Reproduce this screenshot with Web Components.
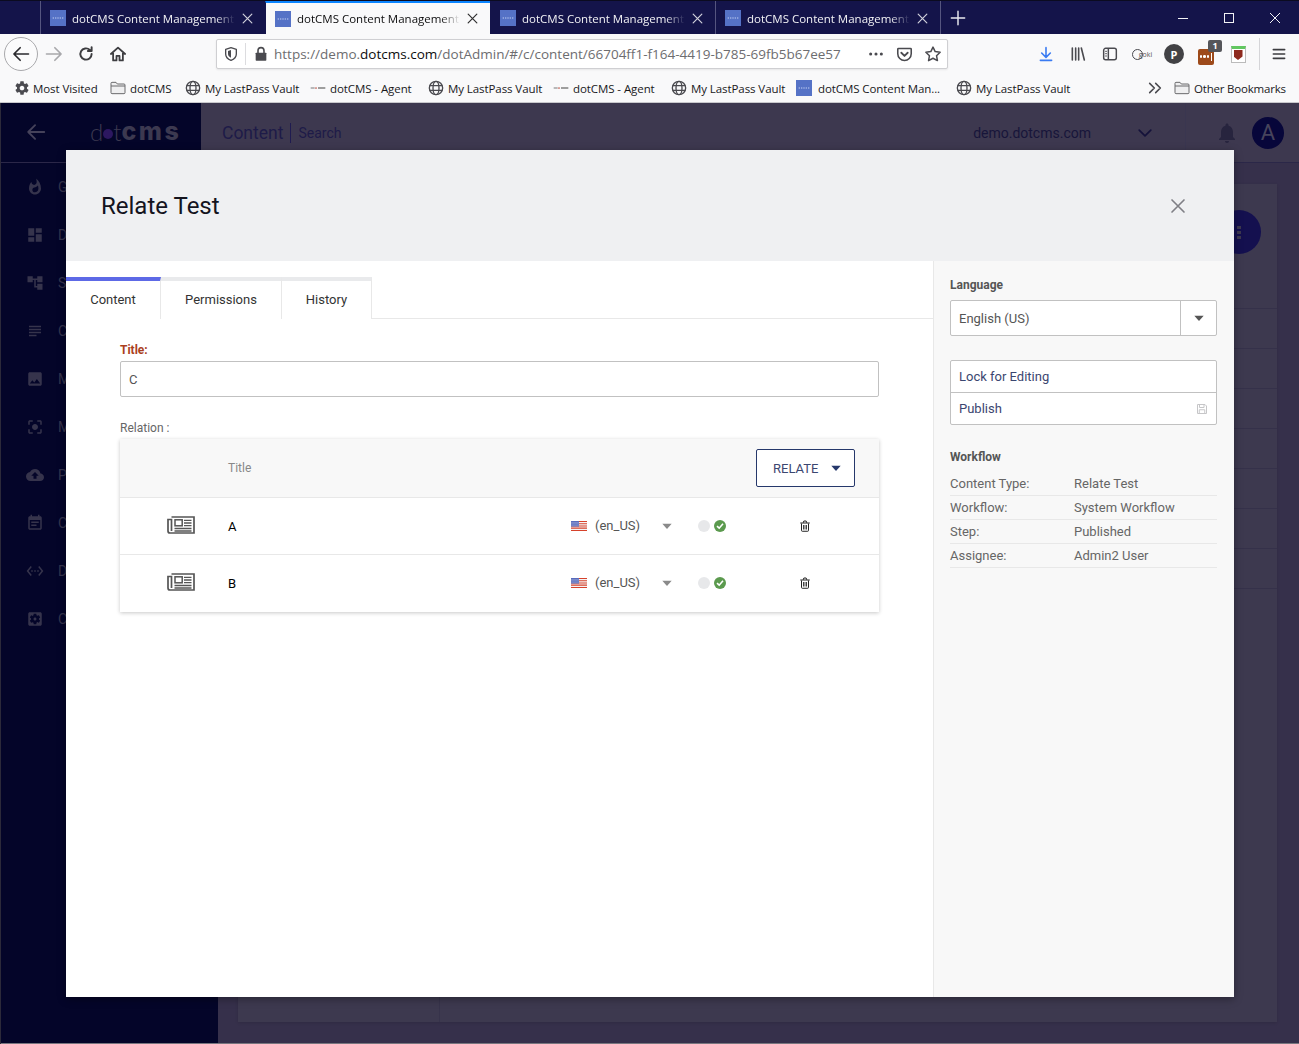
<!DOCTYPE html>
<html lang="en"><head><meta charset="utf-8"><title>dotCMS Content Management</title>
<style>
html,body{margin:0;padding:0;background:#2c2a3a}
body{width:1299px;height:1044px;overflow:hidden;font-family:Roboto,"Liberation Sans",sans-serif}
</style></head><body>
<browser-frame>
  <tab-strip>
    <br-tab sep>dotCMS Content Management</br-tab>
    <br-tab active>dotCMS Content Management</br-tab>
    <br-tab>dotCMS Content Management</br-tab>
    <br-tab sep>dotCMS Content Management</br-tab>
  </tab-strip>
  <nav-toolbar></nav-toolbar>
  <bookmark-bar>
    <bm-item icon="gear" w="96" gap="3">Most Visited</bm-item>
    <bm-item icon="folder" w="75">dotCMS</bm-item>
    <bm-item icon="globe" w="125">My LastPass Vault</bm-item>
    <bm-item icon="mini" w="118">dotCMS - Agent</bm-item>
    <bm-item icon="globe" w="125">My LastPass Vault</bm-item>
    <bm-item icon="mini" w="118">dotCMS - Agent</bm-item>
    <bm-item icon="globe" w="125">My LastPass Vault</bm-item>
    <bm-item icon="fav" w="160" gap="6">dotCMS Content Man...</bm-item>
    <bm-item icon="globe" w="191">My LastPass Vault</bm-item>
    <bm-item icon="chev2" w="27"></bm-item>
    <bm-item icon="folder" w="125" tight>Other Bookmarks</bm-item>
  </bookmark-bar>
</browser-frame>
<app-shell>
  <nav-entry icon="whatshot">G</nav-entry>
  <nav-entry icon="dashboard">D</nav-entry>
  <nav-entry icon="hub">S</nav-entry>
  <nav-entry icon="subject">C</nav-entry>
  <nav-entry icon="image">M</nav-entry>
  <nav-entry icon="focus">M</nav-entry>
  <nav-entry icon="cloud">P</nav-entry>
  <nav-entry icon="event">C</nav-entry>
  <nav-entry icon="ethernet">D</nav-entry>
  <nav-entry icon="settings">C</nav-entry>
</app-shell>
<edit-dialog></edit-dialog>

<script>
const S=(w,inner,vb)=>`<svg xmlns="http://www.w3.org/2000/svg" width="${w}" height="${w}" viewBox="${vb||'0 0 24 24'}" style="display:block">${inner}</svg>`;
const M=d=>`<path fill="currentColor" d="${d}"/>`;
const L=(d,sw)=>`<path fill="none" stroke="currentColor" stroke-width="${sw||1.5}" stroke-linecap="round" stroke-linejoin="round" d="${d}"/>`;
const ICONS={
 whatshot:M("M13.5.67s.74 2.65.74 4.8c0 2.06-1.35 3.73-3.41 3.73-2.07 0-3.63-1.67-3.63-3.73l.03-.36C5.21 7.51 4 10.62 4 14c0 4.42 3.58 8 8 8s8-3.58 8-8C20 8.61 17.41 3.8 13.5.67zM11.71 19c-1.78 0-3.22-1.4-3.22-3.14 0-1.62 1.05-2.76 2.81-3.12 1.77-.36 3.6-1.21 4.62-2.58.39 1.29.59 2.65.59 4.04 0 2.65-2.15 4.8-4.8 4.8z"),
 dashboard:M("M3 13h8V3H3v10zm0 8h8v-6H3v6zm10 0h8V11h-8v10zm0-18v6h8V3h-8z"),
 hub:M("M22 11V3h-7v3H9V3H2v8h7V8h2v10h4v3h7v-8h-7v3h-2V8h2v3z"),
 subject:M("M14 17H4v2h10v-2zm6-8H4v2h16V9zM4 15h16v-2H4v2zM4 5v2h16V5H4z"),
 image:M("M21 19V5c0-1.1-.9-2-2-2H5c-1.1 0-2 .9-2 2v14c0 1.1.9 2 2 2h14c1.1 0 2-.9 2-2zM8.5 13.5l2.5 3.01L14.5 12l4.5 6H5l3.5-4.5z"),
 focus:M("M12 8c-2.21 0-4 1.79-4 4s1.79 4 4 4 4-1.79 4-4-1.79-4-4-4zm-7 7H3v4c0 1.1.9 2 2 2h4v-2H5v-4zM5 5h4V3H5c-1.1 0-2 .9-2 2v4h2V5zm14-2h-4v2h4v4h2V5c0-1.1-.9-2-2-2zm0 16h-4v2h4c1.1 0 2-.9 2-2v-4h-2v4z"),
 cloud:M("M19.35 10.04C18.67 6.59 15.64 4 12 4 9.11 4 6.6 5.64 5.35 8.04 2.34 8.36 0 10.91 0 14c0 3.31 2.69 6 6 6h13c2.76 0 5-2.24 5-5 0-2.64-2.05-4.78-4.65-4.96zM14 13v4h-4v-4H7l5-5 5 5h-3z"),
 event:M("M17 10H7v2h10v-2zm2-7h-1V1h-2v2H8V1H6v2H5c-1.11 0-1.99.9-1.99 2L3 19c0 1.1.89 2 2 2h14c1.1 0 2-.9 2-2V5c0-1.1-.9-2-2-2zm0 16H5V8h14v11zm-5-5H7v2h7v-2z"),
 ethernet:M("M7.77 6.76L6.23 5.48.82 12l5.41 6.52 1.54-1.28L3.42 12l4.35-5.24zM7 13h2v-2H7v2zm10-2h-2v2h2v-2zm-6 2h2v-2h-2v2zm6.77-7.52l-1.54 1.28L20.58 12l-4.35 5.24 1.54 1.28L23.18 12l-5.41-6.52z"),
 settings:M("M12 10c-1.1 0-2 .9-2 2s.9 2 2 2 2-.9 2-2-.9-2-2-2zm7-7H5c-1.11 0-2 .9-2 2v14c0 1.1.89 2 2 2h14c1.11 0 2-.9 2-2V5c0-1.1-.89-2-2-2zm-1.75 9c0 .23-.02.46-.05.68l1.48 1.16c.13.11.17.3.08.45l-1.4 2.42c-.09.15-.27.21-.43.15l-1.74-.7c-.36.28-.76.51-1.18.69l-.26 1.85c-.03.17-.18.3-.35.3h-2.8c-.17 0-.32-.13-.35-.29l-.26-1.85c-.43-.18-.82-.41-1.18-.69l-1.74.7c-.16.06-.34 0-.43-.15l-1.4-2.42c-.09-.15-.05-.34.08-.45l1.48-1.16c-.03-.23-.05-.46-.05-.69 0-.23.02-.46.05-.68l-1.48-1.16c-.13-.11-.17-.3-.08-.45l1.4-2.42c.09-.15.27-.21.43-.15l1.74.7c.36-.28.76-.51 1.18-.69l.26-1.85c.03-.17.18-.3.35-.3h2.8c.17 0 .32.13.35.29l.26 1.85c.43.18.82.41 1.18.69l1.74-.7c.16-.06.34 0 .43.15l1.4 2.42c.09.15.05.34-.08.45l-1.48 1.16c.03.23.05.46.05.69z"),
 bell:M("M12 22c1.1 0 2-.9 2-2h-4c0 1.1.9 2 2 2zm6-6v-5c0-3.07-1.63-5.64-4.5-6.32V4c0-.83-.67-1.5-1.5-1.5s-1.5.67-1.5 1.5v.68C7.64 5.36 6 7.92 6 11v5l-2 2v1h16v-1l-2-2z"),
 back:L("M3.5 12H21M11 4.5 3.5 12l7.5 7.5",2),
 back2:L("M3 12h17.5M13 4.5 20.5 12 13 19.5",2),
 plus:L("M12 2v20M2 12h20",2.2),
 chevd:L("M5 8.5l7 7 7-7",2),
 reload:L("M19.5 12a7.5 7.5 0 1 1-2.4-5.5M19.5 3v5h-5",2.6),
 home:L("M2.5 12 12 3.5 21.5 12M5.5 10.5V20.5h4.5v-6h4v6h4.5V10.5",2.4),
 shield:`<path fill="none" stroke="currentColor" stroke-width="2" stroke-linejoin="round" d="M12 2.5 20 5v7c0 5-4 8-8 9.5C8 20 4 17 4 12V5z"/><path fill="currentColor" d="M12 6v11.5c-2.5-1.2-4.5-3-4.5-5.5V7.500z"/>`,
 lock:`<path fill="currentColor" d="M5 10h14a1 1 0 0 1 1 1v10a1 1 0 0 1-1 1H5a1 1 0 0 1-1-1V11a1 1 0 0 1 1-1z"/>`+L("M7.5 10.5V7a4.5 4.5 0 0 1 9 0v3.5",2.4),
 more:`<g fill="currentColor"><circle cx="4" cy="12" r="2.3"/><circle cx="12" cy="12" r="2.3"/><circle cx="20" cy="12" r="2.3"/></g>`,
 pocket:L("M3.5 3.5h17a1 1 0 0 1 1 1V11a9.5 9.5 0 0 1-19 0V4.5a1 1 0 0 1 1-1z",2.2)+L("M7.5 9.5 12 14l4.5-4.5",2.6),
 star:L("M12 2.8l2.9 6 6.6.9-4.8 4.6 1.2 6.5L12 17.700l-5.900 3.100 1.200-6.500-4.800-4.600 6.600-.9z",2),
 download:L("M12 2.500V17M5.500 10.500 12 17l6.500-6.500",2.4)+L("M3.500 21.500h17",2.4),
 library:L("M3.500 3v18M8.500 3v18M13 3v18M17 3l4.500 18",2.4),
 sidebar:`<rect x="2.500" y="3.500" width="19" height="17" rx="3" fill="none" stroke="currentColor" stroke-width="2.200"/><path stroke="currentColor" stroke-width="2.200" d="M9.500 3.500v17"/><path stroke="currentColor" stroke-width="1.500" d="M4.800 8h2.500M4.800 11.500h2.500M4.800 15h2.500"/>`,
 menu:L("M3.500 5.500h17M3.500 12h17M3.500 18.500h17",2.4),
 gear:M("M19.430 12.980c.04-.32.07-.64.07-.98s-.03-.66-.07-.98l2.110-1.650c.19-.15.24-.42.12-.64l-2-3.460c-.12-.22-.39-.3-.61-.22l-2.490 1c-.52-.4-1.080-.73-1.690-.98l-.38-2.650C14.460 2.180 14.250 2 14 2h-4c-.25 0-.46.18-.49.42l-.38 2.650c-.61.25-1.170.59-1.690.98l-2.490-1c-.23-.09-.49 0-.61.220l-2 3.460c-.13.22-.07.49.12.64l2.110 1.650c-.04.32-.07.65-.07.98s.03.66.07.98l-2.110 1.650c-.19.15-.24.42-.12.64l2 3.460c.12.22.39.3.61.22l2.490-1c.52.4 1.080.73 1.690.98l.38 2.650c.03.24.24.42.49.42h4c.25 0 .46-.18.49-.42l.38-2.650c.61-.25 1.170-.59 1.690-.98l2.490 1c.23.09.49 0 .61-.22l2-3.460c.12-.22.07-.49-.12-.64l-2.110-1.650zM12 15.500c-1.930 0-3.500-1.570-3.500-3.500s1.570-3.500 3.500-3.500 3.500 1.570 3.500 3.500-1.570 3.500-3.500 3.500z"),
 folder:`<path fill="#efeff0" stroke="#6a6a6c" stroke-width="1.500" stroke-linejoin="round" d="M1.500 5a1.500 1.500 0 0 1 1.500-1.500h6L11 6h10a1.500 1.500 0 0 1 1.500 1.500V19a1.500 1.500 0 0 1-1.500 1.500H3A1.500 1.500 0 0 1 1.500 19z"/><path fill="none" stroke="#6a6a6c" stroke-width="1.500" d="M1.500 9h21"/>`,
 globe:`<g fill="none" stroke="currentColor" stroke-width="2"><circle cx="12" cy="12" r="10"/><ellipse cx="12" cy="12" rx="4.500" ry="10"/><path d="M2.500 8.500h19M2.500 15.500h19"/></g>`,
 mini:`<rect x="1" y="11" width="6" height="2" fill="#999"/><circle cx="9" cy="12" r="1.300" fill="#c0574a"/><rect x="12" y="10.800" width="11" height="2.400" fill="#888"/>`,
 fav:`<rect width="24" height="24" fill="#5572c6"/><path stroke="#9fb1e4" stroke-width="2" stroke-dasharray="2 1.500" d="M4 12h16"/>`,
 chev2:L("M4 5l7 7-7 7M13 5l7 7-7 7",2.4),
 close:L("M4 4l16 16M20 4 4 20",2.2),
 caret:`<path fill="currentColor" d="M4 8h16l-8 9z"/>`,
 save:`<path fill="none" stroke="currentColor" stroke-width="2" stroke-linejoin="round" d="M3 3h15l3 3v15H3z"/><path fill="none" stroke="currentColor" stroke-width="2" d="M7 3v6h9V3M6.500 21v-7.500h11V21"/>`,
 trash:`<g fill="none" stroke="currentColor" stroke-linejoin="round"><path stroke-width="2" d="M5 7v14a1.500 1.500 0 0 0 1.500 1.500h11A1.500 1.500 0 0 0 19 21V7"/><path stroke-width="2" d="M2.500 6h19M8.500 5.500l1.200-3.500h4.600l1.200 3.500"/><path stroke-width="1.700" d="M9 10v9M12 10v9M15 10v9"/></g>`,
};
const define=(n,c)=>customElements.define(n,c);
class Base extends HTMLElement{
  render(html){ (this.shadowRoot||this.attachShadow({mode:'open'})).innerHTML=html; }
}
define('x-icon',class extends Base{connectedCallback(){
  const s=this.getAttribute('size')||16;
  this.render(`<style>:host{display:inline-flex;flex:none;color:${this.getAttribute('color')||'inherit'}}</style>${S(s,ICONS[this.getAttribute('name')])}`);
}});
define('browser-frame',class extends Base{connectedCallback(){
  this.render(`<style>:host{display:block;box-sizing:border-box;font-family:"Open Sans","Noto Sans",sans-serif;border-top:1px solid #0b0b20;height:103px;background:#f9f9fa;border-bottom:1px solid #c8c8cc}</style><slot></slot>`);
}});
define('tab-strip',class extends Base{connectedCallback(){
  this.render(`<style>
  :host{display:flex;height:33px;background:#14144a;padding:0 1px 0 40px;color:#f2f2f5}
  .sep{width:1px;background:#55557f}
  .plus{width:33px;display:flex;align-items:center;justify-content:center;color:#e8e8ee}
  .sp{flex:1}
  .win{width:46px;display:flex;align-items:center;justify-content:center}
  </style><slot></slot><div class="sep"></div><div class="plus"><x-icon name="plus" size="16"></x-icon></div><div class="sp"></div>
  <div class="win"><svg width="12" height="12" viewBox="0 0 12 12"><path d="M1 6.500h10" stroke="#f2f2f5"/></svg></div>
  <div class="win"><svg width="12" height="12" viewBox="0 0 12 12"><rect x="1.500" y="1.500" width="9" height="9" fill="none" stroke="#f2f2f5"/></svg></div>
  <div class="win"><svg width="12" height="12" viewBox="0 0 12 12"><path d="M1 1l10 10M11 1 1 11" stroke="#f2f2f5"/></svg></div>`);
}});
define('br-tab',class extends Base{connectedCallback(){
  const a=this.hasAttribute('active'),sep=this.hasAttribute('sep');
  this.render(`<style>
  :host{display:flex;align-items:center;box-sizing:border-box;width:225px;height:33px;padding-left:9px;font-size:11.5px;letter-spacing:0;
    border-left:1px solid ${sep?'#55557f':'#14144a'};background-clip:padding-box;
    background-color:${a?'#f9f9fa':'transparent'};color:${a?'#0c0c0d':'#f2f2f5'};
    border-top:${a?'2px solid #0a84ff':'0'};padding-top:${a?0:1}px}
  .t{width:163px;margin-left:6px;white-space:nowrap;overflow:hidden;-webkit-mask-image:linear-gradient(90deg,#000 88%,transparent);mask-image:linear-gradient(90deg,#000 88%,transparent)}
  .x{margin-left:6px;opacity:.85}
  </style><x-icon name="fav" size="16"></x-icon><div class="t"><slot></slot></div><x-icon class="x" name="close" size="13"></x-icon>`);
}});
define('nav-toolbar',class extends Base{connectedCallback(){
  const b=(n,c,s)=>`<div class="b" style="color:${c||'#3d3d40'}"><x-icon name="${n}" size="${s||16}"></x-icon></div>`;
  this.render(`<style>
  :host{display:flex;align-items:center;height:36px;padding:4px 0 0 4px;background:#f9f9fa;box-sizing:border-box}
  .b{width:32px;height:32px;display:flex;align-items:center;justify-content:center;flex:none}
  .c{width:34px;height:34px;box-sizing:border-box;border:1px solid #a9a9ac;border-radius:50%;display:flex;align-items:center;justify-content:center;background:#fbfbfc;color:#2a2a2e;flex:none}
  .u{margin-left:82px;width:732px;height:30px;box-sizing:border-box;border:1px solid #cfcfd2;border-radius:2px;background:#fff;box-shadow:0 1px 2px rgba(0,0,0,.08);display:flex;align-items:center;flex:none;font-size:13.5px;letter-spacing:0;color:#6d6d70;white-space:nowrap}
  .u x-icon{color:#4a4a4f}
  .shield{margin-left:6px}
  .div{width:1px;height:22px;background:#dcdcdf;margin:0 7px 0 6px}
  .url{margin-left:5px;flex:none}
  .url b{font-weight:400;color:#0c0c0d}
  .r{margin-left:auto;display:flex;align-items:center;gap:12px;padding-right:5px;flex:none}
  .r .st{margin-left:-1px}
  .tools{margin-left:82px;display:flex;align-items:center;flex:none}
  .sep{width:1px;height:32px;background:#d5d5d8;margin:0 3px 0 5px;flex:none}
  .ptxt{width:20px;height:20px;border-radius:50%;background:#424245;color:#fff;font:700 11px "Open Sans",sans-serif;display:flex;align-items:center;justify-content:center}
  .lp{width:16px;height:16px;background:#9d4a1a;border-radius:2px;position:relative;margin-top:5px;display:flex;align-items:center;justify-content:center;gap:1px}
  .lp i{width:2.500px;height:2.500px;background:#fff;border-radius:50%}
  .lp em{width:1px;height:8px;background:#fff;margin-left:1px}
  .bad{position:absolute;left:10px;top:-9px;background:#55565a;color:#fff;font:700 9px/12px "Open Sans",sans-serif;width:14px;height:12px;text-align:center;border-radius:2px}
  .mc{width:15px;height:17px;box-sizing:border-box;background:#fff;border:1px solid #bbb;border-top:3px solid #61c760;display:flex;align-items:center;justify-content:center}
  .mc i{width:9px;height:10px;background:#8e2a1e;clip-path:polygon(0 0,100% 0,100% 65%,50% 100%,0 65%)}
  .gk{display:flex;align-items:center;font-size:7px;color:#555;line-height:1;letter-spacing:0}
  .gk u{display:block;width:11px;height:11px;border:1.500px solid #4a4a4f;border-radius:50%;margin-right:-4px;box-sizing:border-box}
  </style>
  <div class="c"><x-icon name="back" size="20"></x-icon></div>
  ${b('back2','#a8a8ab',20)}${b('reload','#3d3d40',18)}${b('home','#3d3d40',18)}
  <div class="u"><x-icon class="shield" name="shield" size="16"></x-icon><div class="div"></div><x-icon name="lock" size="16"></x-icon>
    <div class="url">https://demo.<b>dotcms.com</b>/dotAdmin/#/c/content/66704ff1-f164-4419-b785-69fb5b67ee57</div>
    <div class="r"><x-icon name="more" size="16"></x-icon><x-icon name="pocket" size="17"></x-icon><x-icon class="st" name="star" size="18"></x-icon></div>
  </div>
  <div class="tools">
    ${b('download','#3a7bf2',16)}${b('library','#4a4a4f',16)}${b('sidebar','#4a4a4f',16)}
    <div class="b"><span class="gk"><u></u>goki</span></div>
    <div class="b"><span class="ptxt">P</span></div>
    <div class="b"><div class="lp"><i></i><i></i><i></i><em></em><span class="bad">1</span></div></div>
    <div class="b"><div class="mc"><i></i></div></div>
    <div class="sep"></div>
    ${b('menu','#3d3d40',16)}
  </div>`);
}});
define('bookmark-bar',class extends Base{connectedCallback(){
  this.render(`<style>:host{display:flex;align-items:center;height:32px;padding:4px 0 0 14px;background:#f9f9fa;box-sizing:border-box}</style><slot></slot>`);
}});
define('bm-item',class extends Base{connectedCallback(){
  const ic=this.getAttribute('icon');
  this.render(`<style>:host{display:flex;align-items:center;flex:none;box-sizing:border-box;width:${this.getAttribute('w')}px;gap:${this.getAttribute('gap')||4}px;font-size:11.5px;letter-spacing:${this.hasAttribute('tight')?-.2:-.08}px;color:#18181a;white-space:nowrap}
  x-icon{color:#4a4a4f}</style><x-icon name="${ic}" size="16"></x-icon><span><slot></slot></span>`);
}});
define('nav-entry',class extends Base{connectedCallback(){
  this.render(`<style>:host{display:flex;align-items:center;height:48px;padding-left:24px;box-sizing:border-box;color:#36344c;font-size:14px;gap:14px}
  x-icon{width:18px;margin-left:1px}</style><x-icon name="${this.getAttribute('icon')}" size="18"></x-icon><span><slot></slot></span>`);
}});
define('app-shell',class extends Base{connectedCallback(){
  const rows=Array(7).fill('<div class="row"></div>').join('');
  this.render(`<style>
  :host{display:grid;grid-template-columns:217px 1fr;grid-template-rows:60px 1fr;height:940px;margin-left:1px;background:#36304b;position:relative;border-bottom:1px solid #77767f;box-sizing:content-box}
  header{grid-column:1/3;display:flex;align-items:center;background:#3d384f;border-bottom:1px solid #2b2748;box-sizing:border-box;color:#1b1842}
  .logo{width:200px;height:100%;background:#040529;display:flex;align-items:center;flex:none;box-sizing:border-box;padding:0 0 2px 89px;color:#3c3950;font:300 24px/1 Lato,sans-serif;position:relative}
  .logo b{font:800 25px/1 Inter,sans-serif;letter-spacing:2.5px}
  .logo i{width:10px;height:10px;border-radius:50%;background:#2c1760;margin:4px 0 0 0}
  .back{position:absolute;left:24px;color:#45425a;top:18px}
  .ttl{font-size:17.5px;margin-left:21px;color:#1e1b48}
  .bar{width:1px;height:20px;background:#1f1b50;margin:0 7px}
  .srch{font-size:14px;color:#1e1b48}
  .host{margin-left:auto;font-size:14px;color:#17153a}
  .chev{margin-left:44px;color:#14123a}
  .dv{width:1px;height:60px;background:#3a3650;margin-left:30px}
  .bell{margin-left:29px;color:#27243e}
  .av{width:32px;height:32px;border-radius:50%;background:#07063a;color:#47445c;font-size:22px;display:flex;align-items:center;justify-content:center;margin:0 15px 0 13px;font-family:Roboto,sans-serif;flex:none}
  aside{background:#040529;overflow:hidden}
  main{padding:21px 22px 21px 20px;display:flex;min-width:0;position:relative}
  .card{flex:1;background:#3d394f;display:flex;flex-direction:column;box-shadow:0 1px 3px rgba(0,0,0,.12)}
  .top{height:125px;flex:none;border-bottom:1px solid #35314a;box-sizing:border-box;position:relative}
  .fab{position:absolute;right:16px;top:26px;width:44px;height:44px;border-radius:50%;background:#14104f;display:flex;flex-direction:column;gap:2px;align-items:center;justify-content:center}
  .fab i{width:4px;height:3px;background:#3d394f;display:block}
  .row{height:40px;flex:none;border-bottom:1px solid #35314a;box-sizing:border-box}
  .rest{flex:1;display:flex}
  .rest div{width:201px;border-right:1px solid #37334b}
  </style>
  <header>
    <div class="logo"><span class="back"><x-icon name="back" size="22"></x-icon></span><span>d</span><i></i><span>t</span><b>cms</b></div>
    <span class="ttl">Content</span><span class="bar"></span><span class="srch">Search</span>
    <span class="host">demo.dotcms.com</span>
    <x-icon class="chev" name="chevd" size="20"></x-icon>
    <span class="dv"></span>
    <x-icon class="bell" name="bell" size="24"></x-icon>
    <div class="av">A</div>
  </header>
  <aside><slot></slot></aside>
  <main><div class="card"><div class="top"><div class="fab"><i></i><i></i><i></i></div></div>${rows}<div class="rest"><div></div></div></div></main>`);
}});
define('ui-field',class extends Base{connectedCallback(){
  this.render(`<style>:host{display:flex;align-items:center;box-sizing:border-box;height:36px;border:1px solid #c1c1c1;border-radius:2px;background:#fff;padding-left:8px;font-size:13px;color:#555}</style><slot></slot>`);
}});
define('rel-row',class extends Base{connectedCallback(){
  this.render(`<style>
  :host{display:flex;align-items:center;height:57px;box-sizing:border-box;border-bottom:1px solid #e8e8e8;position:relative;font-size:13px;color:#000}
  :host([last]){border-bottom:0}
  .news{margin-left:47px;width:28px;height:18px;color:#555;flex:none;margin-top:-3px}
  .tt{margin-left:33px;width:343px;flex:none}
  .fl{width:16px;height:10px;flex:none;margin-top:-1px}
  .loc{margin-left:8px;color:#555;width:45px;flex:none;margin-top:-2px}
  .car{margin-left:20px;color:#8a8a8a;flex:none;margin-top:-1px}
  .d1{width:12px;height:12px;border-radius:50%;background:#e7e8ea;margin-left:24px;flex:none;margin-top:-1px}
  .d2{width:12px;height:12px;border-radius:50%;background:#5b9a4e;margin-left:4px;flex:none;display:flex;align-items:center;justify-content:center;margin-top:-1px}
  .tr{margin-left:73px;color:#222;flex:none;margin-top:-1px}
  </style>
  <svg class="news" width="28" height="18" viewBox="0 0 28 18"><g fill="none" stroke="currentColor"><path stroke-width="1.700" d="M4.500 1h22.500v16H3A2 2 0 0 1 1 15V3.500h3.500V15"/><rect x="8" y="3.800" width="7.200" height="6" stroke-width="1.500"/><path stroke-width="1.300" d="M17 4.300h7.500M17 7h7.500M17 9.700h7.500M7.500 12.500h17M7.500 15h17"/></g></svg>
  <span class="tt"><slot></slot></span>
  <svg class="fl" width="16" height="10" viewBox="0 0 16 10"><rect width="16" height="10" fill="#f4f4f6"/><path fill="#d6422b" d="M0 0h16v1.100H0zM0 2.200h16v1.100H0zM0 4.400h16v1.100H0zM0 6.600h16v1.100H0zM0 8.900h16V10H0z"/><rect width="8" height="5.500" fill="#4d62b8"/><path stroke="#dfe3f5" stroke-width=".8" stroke-dasharray="1 1" d="M.5 1.300h7M.5 2.800h7M.5 4.200h7"/></svg>
  <span class="loc">(en_US)</span>
  <x-icon class="car" name="caret" size="14"></x-icon>
  <span class="d1"></span>
  <span class="d2"><svg width="8" height="8" viewBox="0 0 8 8"><path d="M1 4.200 3.200 6.200 7 1.800" fill="none" stroke="#fff" stroke-width="1.600"/></svg></span>
  <x-icon class="tr" name="trash" size="12"></x-icon>`);
}});
define('wf-row',class extends Base{connectedCallback(){
  this.render(`<style>:host{display:flex;align-items:center;height:24px;box-sizing:border-box;border-bottom:1px solid #e8e8e8;font-size:13px;color:#666}
  span{width:124px;flex:none}</style><span>${this.getAttribute('k')}</span><slot></slot>`);
}});
define('edit-dialog',class extends Base{connectedCallback(){
  this.render(`<style>
  :host{position:absolute;left:66px;top:150px;width:1168px;height:847px;background:#fff;display:flex;flex-direction:column;box-shadow:0 2px 8px rgba(0,0,0,.35);z-index:5;color:#333}
  .hd{height:111px;flex:none;background:#eff0f2;display:flex;align-items:center;justify-content:space-between;padding:0 47px 0 35px;box-sizing:border-box}
  h1{font:400 24px/1 Roboto,sans-serif;margin:0;color:#14141e}
  .hd x-icon{color:#7f7f85}
  .bd{flex:1;display:flex;min-height:0}
  .mn{flex:1;min-width:0;padding-top:16px;border-right:1px solid #e8e8e8}
  .tabs{display:flex;height:42px;box-sizing:border-box;border-bottom:1px solid #e8e8e8;font-size:13px;color:#333}
  .tab{box-sizing:border-box;height:42px;border-top:4px solid #e9eaec;border-right:1px solid #e8e8e8;display:flex;align-items:center;justify-content:center;padding-bottom:2px;background:#fff}
  .tab.on{border-top-color:#5d69e6;width:95px;margin-bottom:-1px}
  .fm{padding:24px 54px 0;width:759px;box-sizing:content-box}
  .lb{font-size:12px;line-height:14px;display:block}
  .rq{font-weight:700;color:#ab3f1e;height:14px;margin-bottom:4px}
  .rl{color:#666;margin:24px 0 4px}
  .tbl{background:#fff;box-shadow:0 1px 4px rgba(0,0,0,.22);width:759px}
  .th{height:59px;background:#f8f8f8;border-bottom:1px solid #e8e8e8;box-sizing:border-box;display:flex;align-items:center;font-size:12px;color:#888;padding-left:108px;justify-content:space-between;padding-right:24px}
  .rb{width:99px;height:38px;box-sizing:border-box;border:1px solid #26386b;border-radius:2px;background:#fff;display:flex;align-items:center;justify-content:space-between;padding:0 11px 0 16px;color:#3b4670;font-size:13px}
  .rb x-icon{color:#26386b}
  .sd{width:300px;flex:none;background:#f8f8f8;box-sizing:border-box;padding:17px 17px 0 16px;font-size:13px;color:#555}
  .h{font-size:12px;font-weight:700;line-height:14px;color:#555}
  .sel{margin-top:8px;height:36px;box-sizing:border-box;border:1px solid #c1c1c1;border-radius:2px;background:#fff;display:flex;align-items:center;padding-left:8px}
  .sel span{flex:1}
  .sel div{width:36px;height:100%;box-sizing:border-box;border-left:1px solid #c1c1c1;display:flex;align-items:center;justify-content:center;color:#555}
  .act{margin-top:24px;border:1px solid #c1c1c1;border-radius:2px;background:#fff;color:#3b4670}
  .act div{height:31px;display:flex;align-items:center;justify-content:space-between;padding:0 8px;box-sizing:border-box}
  .act div+div{border-top:1px solid #c1c1c1;height:32px}
  .act x-icon{color:#c6c6c8}
  .wf{margin-top:25px;margin-bottom:8px}
  </style>
  <div class="hd"><h1>Relate Test</h1><x-icon name="close" size="18"></x-icon></div>
  <div class="bd">
    <div class="mn">
      <div class="tabs"><div class="tab on">Content</div><div class="tab" style="width:121px">Permissions</div><div class="tab" style="width:90px">History</div></div>
      <div class="fm">
        <label class="lb rq">Title:</label>
        <ui-field>C</ui-field>
        <label class="lb rl">Relation :</label>
        <div class="tbl">
          <div class="th"><span>Title</span><div class="rb"><span>RELATE</span><x-icon name="caret" size="14"></x-icon></div></div>
          <rel-row>A</rel-row>
          <rel-row last>B</rel-row>
        </div>
      </div>
    </div>
    <div class="sd">
      <div class="h">Language</div>
      <div class="sel"><span>English (US)</span><div><x-icon name="caret" size="14"></x-icon></div></div>
      <div class="act"><div>Lock for Editing</div><div>Publish<x-icon name="save" size="12"></x-icon></div></div>
      <div class="h wf">Workflow</div>
      <wf-row k="Content Type:">Relate Test</wf-row>
      <wf-row k="Workflow:">System Workflow</wf-row>
      <wf-row k="Step:">Published</wf-row>
      <wf-row k="Assignee:">Admin2 User</wf-row>
    </div>
  </div>`);
}});
</script>
</body></html>
